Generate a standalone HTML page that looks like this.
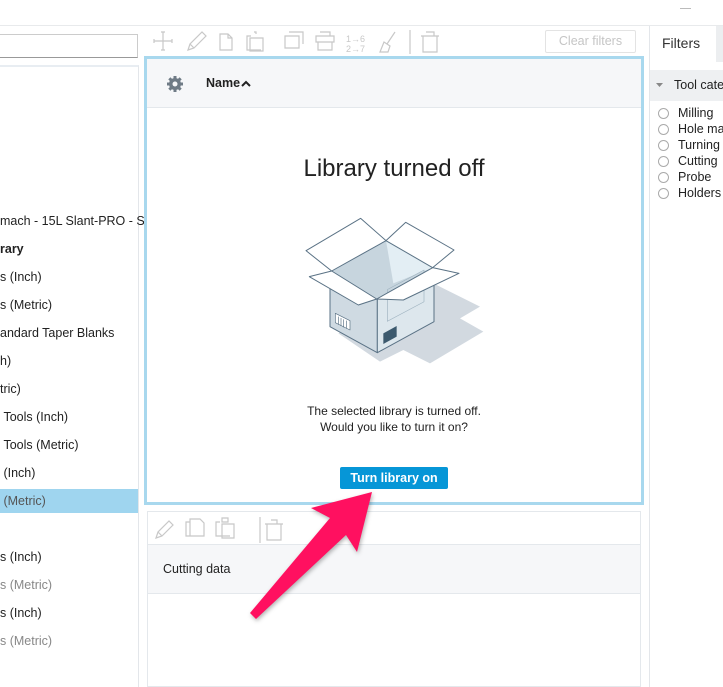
<!DOCTYPE html>
<html><head><meta charset="utf-8"><style>
*{margin:0;padding:0;box-sizing:border-box}
body{width:723px;height:687px;overflow:hidden;background:#fff;font-family:"Liberation Sans",sans-serif;position:relative;color:#222}
.a{position:absolute}
.li{position:absolute;left:0;font-size:12.5px;white-space:nowrap;color:#222}
.g{color:#888}
.r{position:absolute;left:658px;width:11px;height:11px;border:1px solid #aaa;border-radius:50%}
.rt{position:absolute;left:678px;font-size:12.5px}
</style></head><body>
<div class="a" style="left:680px;top:8px;width:11px;height:1px;background:#bbb"></div>
<div class="a" style="left:0;top:25px;width:723px;height:1px;background:#e8eaec"></div>
<div class="a" style="left:0;top:34px;width:138px;height:24px;border:1px solid #ccc;border-left:none;border-bottom:1px solid #999"></div>
<div class="a" style="left:0;top:65px;width:139px;height:622px;border-top:2px solid #e8edf2;border-right:1px solid #e3e6ea"></div>
<div class="li" style="top:214px">mach - 15L Slant-PRO - S</div>
<div class="li" style="top:242px;font-weight:bold">rary</div>
<div class="li" style="top:270px">s (Inch)</div>
<div class="li" style="top:298px">s (Metric)</div>
<div class="li" style="top:326px">andard Taper Blanks</div>
<div class="li" style="top:354px">h)</div>
<div class="li" style="top:382px">tric)</div>
<div class="li" style="top:410px">&nbsp;Tools (Inch)</div>
<div class="li" style="top:438px">&nbsp;Tools (Metric)</div>
<div class="li" style="top:466px">&nbsp;(Inch)</div>
<div class="a" style="left:0;top:489px;width:138px;height:24px;background:#9fd5ef"></div>
<div class="li" style="top:494px;color:#555">&nbsp;(Metric)</div>
<div class="li" style="top:550px">s (Inch)</div>
<div class="li g" style="top:578px">s (Metric)</div>
<div class="li" style="top:606px">s (Inch)</div>
<div class="li g" style="top:634px">s (Metric)</div>
<svg class="a" style="left:150px;top:28px" width="290" height="28" fill="none" stroke="#c8c8c8" stroke-width="1.2">
<path d="M13 4v18M4 13h18M11 4h4M11 22h4M4 11v4M22 11v4"/>
<path d="M38 22l2-6 12-12 4 4-12 12zM40 16l4 4"/>
<path d="M70 6h8l4 4v12h-12zM78 6v4h4"/>
<path d="M101 8h-4v14h14"/><path d="M104 4h2v2M100 10h13v13h-13z"/>
<path d="M135 8h14v12h-14zM139 4h14v12"/>
<path d="M166 8h18v6h-18zM168 14v8h14v-8M170 4h10v4"/>
<text x="196" y="14" font-size="9" fill="#c8c8c8" stroke="none" font-family="Liberation Sans">1→6</text>
<text x="196" y="24" font-size="9" fill="#c8c8c8" stroke="none" font-family="Liberation Sans">2→7</text>
<path d="M230 24l4-10 6 4-2 6zM237 16l8-12"/>
<path d="M260 2v24"/>
<path d="M273 8h14v16h-14zM271 8h18M276 4h8v4"/>
</svg>
<div class="a" style="left:545px;top:30px;width:91px;height:23px;border:1px solid #e3e3e3;border-radius:2px;font-size:12.5px;color:#c5c5c5;text-align:center;line-height:21px">Clear filters</div>
<div class="a" style="left:144px;top:56px;width:500px;height:449px;border:3px solid #a8d8ee"></div>
<div class="a" style="left:147px;top:59px;width:494px;height:49px;background:#f6f7f9;border-bottom:1px solid #e4e8ec"></div>
<svg class="a" style="left:166px;top:75px" width="18" height="18" viewBox="0 0 18 18"><g fill="#6f7b86"><circle cx="9" cy="9" r="6"/><rect x="7.5" y="1" width="3" height="16"/><rect x="1" y="7.5" width="16" height="3"/><rect x="7.5" y="1" width="3" height="16" transform="rotate(45 9 9)"/><rect x="7.5" y="1" width="3" height="16" transform="rotate(-45 9 9)"/></g><circle cx="9" cy="9" r="2.5" fill="#f6f7f9"/></svg>
<div class="a" style="left:206px;top:76px;font-size:12.5px;font-weight:bold;color:#222">Name</div>
<svg class="a" style="left:241px;top:80px" width="10" height="8"><path d="M1 6l4-4 4 4" stroke="#222" stroke-width="2" fill="none"/></svg>
<div class="a" style="left:147px;top:155px;width:494px;text-align:center;font-size:24px;color:#222">Library turned off</div>
<svg class="a" style="left:280px;top:200px" width="220" height="180" viewBox="0 0 660 540" stroke-linejoin="round">
<polygon points="460,250 600,320 540,355 610,395 450,490 370,450 300,485 175,400 300,330" fill="#d2d9e0"/>
<polygon points="150,265 292,298 292,458 150,380" fill="#cfdae2" stroke="#5a7285" stroke-width="3"/>
<polygon points="292,298 462,205 462,365 292,458" fill="#dde7ed" stroke="#5a7285" stroke-width="3"/>
<polygon points="155,213 318,122 458,203 290,297" fill="#c7d5de"/>
<polygon points="318,122 340,250 458,203" fill="#e3eef4"/>
<rect x="322" y="270" width="110" height="95" fill="none" stroke="#9fb3c0" stroke-width="2" transform="skewY(-28) translate(0,170)"/>
<polygon points="78,152 242,55 318,122 155,213" fill="#fff" stroke="#5a7285" stroke-width="3"/>
<polygon points="318,122 377,67 522,150 458,203" fill="#fff" stroke="#5a7285" stroke-width="3"/>
<polygon points="88,230 155,213 290,297 235,315" fill="#fff" stroke="#5a7285" stroke-width="3"/>
<polygon points="290,297 458,203 537,220 370,300" fill="#fff" stroke="#5a7285" stroke-width="3"/>
<polygon points="166,340 210,362 210,390 166,368" fill="#fff" stroke="#5a7285" stroke-width="2"/>
<path d="M175 350v24M183 354v24M191 358v24M199 362v24" stroke="#5a7285" stroke-width="2"/>
<polygon points="310,400 350,378 350,410 310,432" fill="#3d5a6e"/>
</svg>
<div class="a" style="left:147px;top:403px;width:494px;text-align:center;font-size:12px;line-height:16px;color:#222">The selected library is turned off.<br>Would you like to turn it on?</div>
<div class="a" style="left:340px;top:467px;width:108px;height:22px;background:#0696d7;border-radius:2px;color:#fff;font-size:12.5px;font-weight:bold;text-align:center;line-height:22px">Turn library on</div>
<div class="a" style="left:147px;top:511px;width:494px;height:176px;border:1px solid #e4e8ec"></div>
<svg class="a" style="left:150px;top:514px" width="140" height="30" fill="none" stroke="#c8c8c8" stroke-width="1.2">
<path d="M6 24l2-6 11-11 4 4-11 11zM8 18l4 4"/>
<path d="M40 8h-4v14h14M40 5h10l4 4v13h-14z"/>
<path d="M70 8h-4v14h14M72 4h6v4h-6zM72 10h12v14h-12z"/>
<path d="M110 3v26"/>
<path d="M117 10h14v16h-14zM115 10h18M121 6h6v4"/>
</svg>
<div class="a" style="left:148px;top:544px;width:492px;height:50px;background:#f6f7f9;border-top:1px solid #e4e8ec;border-bottom:1px solid #e4e8ec"></div>
<div class="a" style="left:163px;top:562px;font-size:12.5px;color:#222">Cutting data</div>
<div class="a" style="left:649px;top:26px;width:1px;height:661px;background:#e3e6ea"></div>
<div class="a" style="left:716px;top:26px;width:7px;height:36px;background:#eceef0"></div>
<div class="a" style="left:662px;top:35px;font-size:14px;color:#333">Filters</div>
<div class="a" style="left:650px;top:70px;width:73px;height:31px;background:#eef0f2"></div>
<svg class="a" style="left:656px;top:83px" width="8" height="6"><path d="M0 0h7l-3.5 4z" fill="#888"/></svg>
<div class="a" style="left:674px;top:78px;font-size:12.5px;white-space:nowrap">Tool cate</div>
<div class="r" style="top:108px"></div><div class="rt" style="top:106px">Milling</div>
<div class="r" style="top:124px"></div><div class="rt" style="top:122px;white-space:nowrap">Hole ma</div>
<div class="r" style="top:140px"></div><div class="rt" style="top:138px">Turning</div>
<div class="r" style="top:156px"></div><div class="rt" style="top:154px">Cutting</div>
<div class="r" style="top:172px"></div><div class="rt" style="top:170px">Probe</div>
<div class="r" style="top:188px"></div><div class="rt" style="top:186px">Holders</div>
<svg class="a" style="left:0;top:0;filter:drop-shadow(1px 2px 2px rgba(0,0,0,.3))" width="723" height="687"><polygon points="372,492 357,552 346,535 256,619 250,613 330,518 311,508" fill="#ff1060"/></svg>
</body></html>
